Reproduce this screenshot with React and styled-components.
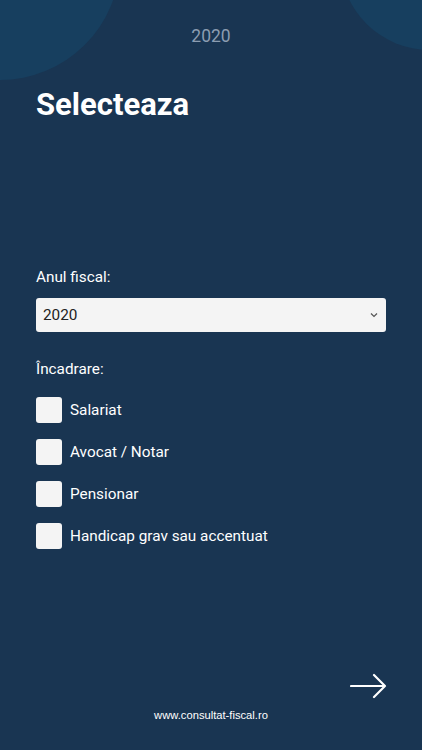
import React from "react";
import styled, { createGlobalStyle } from "styled-components";

const Global = createGlobalStyle`
  html, body { margin: 0; padding: 0; background: #193552; }
  * { box-sizing: border-box; }
  body { font-family: Roboto, "Noto Sans", sans-serif; }
`;

const Screen = styled.div`
  position: relative;
  width: 422px;
  height: 750px;
  overflow: hidden;
  background: #193552;
  display: flex;
  flex-direction: column;
  padding: 0 36px;
`;

const Blob = styled.div`
  position: absolute;
  border-radius: 50%;
  background: #173f5f;
  width: ${(p) => p.size}px;
  height: ${(p) => p.size}px;
  left: ${(p) => p.left}px;
  top: ${(p) => p.top}px;
`;

const YearTitle = styled.div`
  position: relative;
  margin-top: 25px;
  text-align: center;
  color: #8c9db1;
  font-size: 17.5px;
  line-height: 22px;
`;

const Heading = styled.h1`
  position: relative;
  margin: 38px 0 0;
  color: #ffffff;
  font-size: 31px;
  font-weight: 700;
  line-height: 40px;
`;

const Form = styled.div`
  margin-top: 142px;
  display: flex;
  flex-direction: column;
`;

const Label = styled.div`
  color: #ffffff;
  font-size: 15.3px;
  line-height: 20px;
`;

const SelectBox = styled.div`
  margin-top: 11px;
  height: 34px;
  background: #f4f4f4;
  border-radius: 3px;
  display: flex;
  align-items: center;
  justify-content: space-between;
  padding: 0 8px 0 7px;
  color: #222;
  font-size: 15.3px;
`;

const Options = styled.div`
  display: flex;
  flex-direction: column;
  gap: 16px;
  margin-top: 18px;
`;

const Row = styled.label`
  display: flex;
  align-items: center;
  gap: 8px;
  color: #ffffff;
  font-size: 15.3px;
  height: 26px;
`;

const Box = styled.span`
  width: 26px;
  height: 26px;
  border-radius: 3px;
  background: #f4f4f4;
  flex: none;
`;

const Section = styled.div`
  margin-top: 27px;
`;

const Spacer = styled.div`
  flex: 1;
`;

const ArrowRow = styled.div`
  display: flex;
  justify-content: flex-end;
  margin-right: -1px;
`;

const Footer = styled.div`
  margin-top: 9px;
  margin-bottom: 28px;
  text-align: center;
  color: #ffffff;
  font-family: "Liberation Sans", Arial, sans-serif;
  font-size: 11.2px;
  line-height: 14px;
`;

const options = ["Salariat", "Avocat / Notar", "Pensionar", "Handicap grav sau accentuat"];

export default function App() {
  return (
    <>
      <Global />
      <Screen>
        <Blob size={240} left={-120} top={-160} />
        <Blob size={180} left={340} top={-130} />
        <YearTitle>2020</YearTitle>
        <Heading>Selecteaza</Heading>
        <Form>
          <Label>Anul fiscal:</Label>
          <SelectBox>
            <span>2020</span>
            <svg width="8" height="6" viewBox="0 0 8 6">
              <path d="M1 1.5 L4 4.5 L7 1.5" fill="none" stroke="#555" strokeWidth="1.2" />
            </svg>
          </SelectBox>
          <Section>
            <Label>Încadrare:</Label>
            <Options>
              {options.map((o) => (
                <Row key={o}>
                  <Box />
                  {o}
                </Row>
              ))}
            </Options>
          </Section>
        </Form>
        <Spacer />
        <ArrowRow>
          <svg width="37" height="26" viewBox="0 0 37 26">
            <path d="M1 13 H35 M24 2 L35 13 L24 24" fill="none" stroke="#ffffff" strokeWidth="2.2" strokeLinecap="round" strokeLinejoin="round" />
          </svg>
        </ArrowRow>
        <Footer>www.consultat-fiscal.ro</Footer>
      </Screen>
    </>
  );
}
